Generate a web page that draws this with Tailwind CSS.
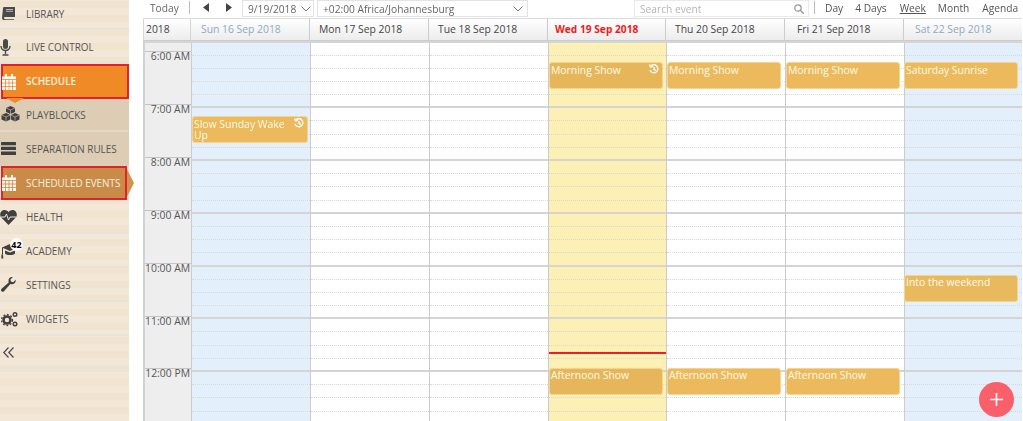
<!DOCTYPE html>
<html><head><meta charset="utf-8"><script src="https://cdn.jsdelivr.net/npm/@tailwindcss/browser@4"></script></head>
<body class="bg-white overflow-hidden">
<div class="flex w-[1023px] h-[421px] overflow-hidden font-['Open_Sans',sans-serif] text-[10.4px] text-[#555] blur-[0.3px]">

<!-- sidebar -->
<aside class="w-[129px] shrink-0 h-full relative bg-[repeating-linear-gradient(0deg,#f3e7d7_0,#f3e7d7_7px,#f0e3d0_7px,#f0e3d0_14px)] flex flex-col text-[9.9px] whitespace-nowrap">
  <a class="h-[30px] shrink-0 flex items-center pl-[26px] border-b-2 border-[#e9e2d8] relative">LIBRARY
    <svg class="absolute left-[1px] top-[6px] w-[15px] h-[15px]" viewBox="0 0 15 17" preserveAspectRatio="none"><path fill="#4a4a4a" d="M3 1h11v11.500H4.500C3.300 12.500 3 13 3 13.700s.4 1.300 1.500 1.300H13v1H3.500C2 16 1 15 1 13.500L2 2.500C2.100 1.500 2.400 1 3 1z"/><path stroke="#ddd" stroke-width=".8" d="M5 4h7M5 6h7"/></svg></a>
  <a class="h-[34px] shrink-0 flex items-center pl-[26px] pt-[2px] border-b-2 border-[#e9e2d8] relative">LIVE CONTROL
    <svg class="absolute left-[0px] top-[9px] w-[11px] h-[17px]" viewBox="0 0 11 17"><rect x="3" y="0" width="5" height="10" rx="2.500" fill="#4a4a4a"/><path d="M1 7c0 6 9 6 9 0M5.500 12v3M2.500 16h6" fill="none" stroke="#4a4a4a" stroke-width="1.400"/></svg></a>
  <a class="h-[35px] shrink-0 flex items-center pl-[25px] bg-[#f08a26] text-[#fff3e2] font-semibold relative outline-2 -outline-offset-2 outline-[#e6202b] ml-[1px] z-10">SCHEDULE
    <svg class="absolute left-[1px] top-[10px] w-[14px] h-[16px]" viewBox="0 0 14 16"><path fill="#fff" d="M0 2.500h14V16H0z"/><path fill="#fff" d="M3 0h2v3H3zM9 0h2v3H9z"/><path stroke="#f08a26" stroke-width=".8" d="M0 5.500h14M3.500 5.500V16M7 5.500V16M10.500 5.500V16M0 9h14M0 12.500h14"/></svg>
    <span class="absolute left-[5px] top-[34px] w-0 h-0 border-x-[9px] border-x-transparent border-t-[5px] border-t-[#f08a26]"></span></a>
  <a class="h-[33px] shrink-0 flex items-center pl-[26px] pt-[2px] bg-[#dccdb4] border-b-2 border-[#e4d9c7] relative">PLAYBLOCKS
    <svg class="absolute left-[1px] top-[7px] w-[19px] h-[16px]" viewBox="0 0 19 16" fill="#404040"><path d="M9.500 0l4.500 2v4L9.500 8 5 6V2z"/><path d="M5 7l4.300 2v4.500L5 15.500.5 13.500V9z"/><path d="M14 7l4.500 2v4.500L14 15.500l-4-2V9z"/><path fill="none" stroke="#dccdb4" stroke-width=".6" d="M5 2l4.500 2L14 2M9.500 4v4M.5 9L5 11l4.300-2M5 11v4.500M10 9l4 2 4.500-2M14 11v4.500"/></svg></a>
  <a class="h-[34px] shrink-0 flex items-center pl-[26px] pt-[1px] bg-[#dccdb4] relative">SEPARATION RULES
    <svg class="absolute left-[1px] top-[10px] w-[15px] h-[13px]" viewBox="0 0 15 13" fill="#404040"><rect width="15" height="3.300" rx=".5"/><rect y="4.800" width="15" height="3.300" rx=".5"/><rect y="9.600" width="15" height="3.300" rx=".5"/></svg></a>
  <a class="h-[34px] shrink-0 flex items-center pl-[25px] bg-[#c98c48] text-[#f8efe2] relative outline-2 -outline-offset-2 outline-[#e6202b] ml-[1px] mr-[2px] z-10">SCHEDULED EVENTS
    <svg class="absolute left-[1px] top-[9px] w-[14px] h-[16px]" viewBox="0 0 14 16"><path fill="#fbf4ea" d="M0 2.500h14V16H0z"/><path fill="#fbf4ea" d="M3 0h2v3H3zM9 0h2v3H9z"/><path stroke="#c98c48" stroke-width=".8" d="M0 5.500h14M3.500 5.500V16M7 5.500V16M10.500 5.500V16M0 9h14M0 12.500h14"/></svg>
    <span class="absolute left-[126px] top-[3px] w-0 h-0 border-y-[14px] border-y-transparent border-l-[7px] border-l-[#d09450]"></span></a>
  <a class="h-[34px] shrink-0 flex items-center pl-[26px] pt-[3px] border-b-2 border-[#e9e2d8] relative">HEALTH
    <svg class="absolute left-[0px] top-[10px] w-[17px] h-[15px]" viewBox="0 0 17 15"><path fill="#404040" d="M8.500 15L1.200 7.500C-1 5 .5 0 4.500 0 6.500 0 7.800 1 8.500 2.200 9.200 1 10.500 0 12.500 0c4 0 5.500 5 3.300 7.500z"/><path fill="none" stroke="#f3e7d7" stroke-width="1" d="M1 7h4l1.500-3 2 6 1.500-3h6"/></svg></a>
  <a class="h-[34px] shrink-0 flex items-center pl-[26px] pt-[2px] border-b-2 border-[#e9e2d8] relative">ACADEMY
    <svg class="absolute left-[1px] top-[10px] w-[17px] h-[15px]" viewBox="0 0 17 15" fill="#404040"><path d="M9 0l8 3.500L9 7 2 4v6.500H1V3.500z"/><path d="M4 6.500L9 8.500l5-2v3c-1.500 2-8.500 2-10 0zM.5 10.500h1.500l.3 4H.3z"/></svg>
    <span class="absolute left-[10px] top-[4px] w-[13px] h-[13px] rounded-full bg-white text-black font-bold text-[9px] leading-[13px] text-center">42</span></a>
  <a class="h-[34px] shrink-0 flex items-center pl-[26px] pt-[2px] border-b-2 border-[#e9e2d8] relative">SETTINGS
    <svg class="absolute left-[1px] top-[9px] w-[15px] h-[15px]" viewBox="0 0 15 15"><path fill="#404040" d="M14.700 2.800l-2.500 2.400-2.200-.6-.6-2.200L11.900 0C9.500-.5 7.300 1.200 7.500 4c0 .6.100 1 .2 1.400L.6 11.800c-.8.800-.8 1.800-.1 2.500s1.800.7 2.500-.1l6.400-7.100c3 .8 5.800-1.200 5.300-4.300z"/></svg></a>
  <a class="h-[34px] shrink-0 flex items-center pl-[26px] pt-[2px] border-b-2 border-[#e9e2d8] relative">WIDGETS
    <svg class="absolute left-[1px] top-[9px] w-[17px] h-[16px]" viewBox="0 0 17 16"><circle cx="6" cy="9" r="3.500" fill="none" stroke="#404040" stroke-width="2.600"/><circle cx="6" cy="9" r="5.500" fill="none" stroke="#404040" stroke-width="1.300" stroke-dasharray="1.800 1.800"/><circle cx="14" cy="3.500" r="1.800" fill="none" stroke="#404040" stroke-width="1.400"/><circle cx="14" cy="13" r="1.800" fill="none" stroke="#404040" stroke-width="1.400"/></svg></a>
  <a class="h-[33px] shrink-0 flex items-center pl-[2px] pt-[2px] border-b-2 border-[#e9e2d8]">
    <svg class="w-[11px] h-[11px] ml-[1px]" viewBox="0 0 11 11" fill="none" stroke="#4a4a4a" stroke-width="1.200"><path d="M5.500 .5L.8 5.500l4.700 5M10.500 .5L5.800 5.500l4.700 5"/></svg></a>
</aside>

<!-- calendar -->
<main class="flex-1 min-w-0 pl-[14px] pr-[1px] flex flex-col text-[#555]">
  <div class="h-[18px] shrink-0 flex items-start text-[10.2px] leading-[16px] relative whitespace-nowrap">
    <span class="ml-[7px] w-[39px] shrink-0 text-[#666]">Today</span>
    <span class="w-[1px] h-[13px] mt-[1px] bg-[#bbb]"></span>
    <svg class="ml-[13px] mt-[3px] w-[6px] h-[9px]" viewBox="0 0 6 9"><path fill="#444" d="M6 0v9L0 4.500z"/></svg>
    <svg class="ml-[17px] mt-[3px] w-[6px] h-[9px]" viewBox="0 0 6 9"><path fill="#444" d="M0 0v9l6-4.500z"/></svg>
    <div class="ml-[10px] w-[72px] h-[17px] border border-[#e3e3e3] flex items-center justify-between pl-[5px] pr-[2px] text-[#666]">9/19/2018
      <svg class="w-[10px] h-[6px]" viewBox="0 0 10 6" fill="none" stroke="#777"><path d="M.5.5L5 5 9.500.5"/></svg></div>
    <div class="ml-[3px] w-[211px] h-[17px] border border-[#e3e3e3] flex items-center justify-between pl-[5px] pr-[4px] text-[#666]">+02:00 Africa/Johannesburg
      <svg class="w-[10px] h-[6px]" viewBox="0 0 10 6" fill="none" stroke="#777"><path d="M.5.500L5 5 9.500.500"/></svg></div>
    <div class="ml-[106px] w-[175px] h-[17px] border border-[#eaeaea] flex items-center justify-between pl-[5px] pr-[4px] text-[#b5b5b5]">Search event
      <svg class="w-[10px] h-[10px]" viewBox="0 0 10 10" fill="none" stroke="#999" stroke-width="1.300"><circle cx="4" cy="4" r="3.200"/><path d="M6.500 6.500L9.700 9.700"/></svg></div>
    <span class="ml-[5px] w-[1px] h-[13px] mt-[1px] bg-[#bbb]"></span>
    <span class="ml-[10px]">Day</span><span class="ml-[12px]">4 Days</span><span class="ml-[13px] underline">Week</span><span class="ml-[12px]">Month</span><span class="ml-[13px]">Agenda</span>
  </div>

  <div class="h-[23px] shrink-0 flex text-[10.35px] leading-[21px] text-[#444] bg-linear-to-b from-white to-[#ececec] border-t border-[#ddd] border-b border-b-[#ccc] whitespace-nowrap">
    <div class="w-[48px] pl-[2px] border-x border-[#d5d5d5]">2018</div>
    <div class="w-[119px] pl-[10px] text-[#8fa9bf] border-r border-[#ccc]">Sun 16 Sep 2018</div>
    <div class="w-[119px] pl-[9px] border-r border-[#ccc]">Mon 17 Sep 2018</div>
    <div class="w-[119px] pl-[9px] border-r border-[#ccc]">Tue 18 Sep 2018</div>
    <div class="w-[118px] pl-[7px] font-bold text-[10.2px] text-[#f01a1a] border-r border-[#ccc]">Wed 19 Sep 2018</div>
    <div class="w-[119px] pl-[9px] border-r border-[#ccc]">Thu 20 Sep 2018</div>
    <div class="w-[119px] pl-[12px] border-r border-[#ccc]">Fri 21 Sep 2018</div>
    <div class="w-[118px] pl-[11px] text-[#8fa9bf]">Sat 22 Sep 2018</div>
  </div>

  <div class="flex-1 min-h-0 flex relative overflow-hidden border-t-2 border-[#d5d5d5] text-[10.4px]">
    <div class="w-[48px] shrink-0 bg-[#eeeeee] border-l-2 border-[#cfd3d8] text-[#555] relative" data-gutter>
    </div>
    <div data-day class="w-[119px] relative bg-[#e3effb] border-l border-[#ccc]">
      <div class="absolute left-[0px] top-[73px] w-[116px] h-[27px] z-10 rounded-[3px] bg-[#ecba5c] border border-[#f3d592] text-[#fffbea] leading-[11px] pl-[1px] pr-[14px] pt-[2px]">Slow Sunday Wake Up<svg class="absolute right-[3px] top-[1px] w-[10px] h-[10px]" viewBox="0 0 10 10" fill="none" stroke="#fff" stroke-width="1.300"><path d="M1.500 2.500A4 4 0 1 1 1 6M.5 .5l1 2.500 2.500-.6M5 3v2.500l2 1"/></svg></div>
    </div>
    <div data-day class="w-[119px] relative bg-white border-l border-[#ccc]"></div>
    <div data-day class="w-[119px] relative bg-white border-l border-[#ccc]"></div>
    <div data-day class="w-[118px] relative bg-[#fdf0b5] border-l border-[#ccc]">
      <div class="absolute left-[0px] top-[19px] w-[114px] h-[27px] z-10 rounded-[3px] bg-[#e8b65a] border border-[#f3d592] text-[#fffbea] leading-[13px] pl-[1px] pt-[1px]">Morning Show<svg class="absolute right-[3px] top-[1px] w-[10px] h-[10px]" viewBox="0 0 10 10" fill="none" stroke="#fff" stroke-width="1.300"><path d="M1.500 2.500A4 4 0 1 1 1 6M.5 .5l1 2.500 2.500-.6M5 3v2.500l2 1"/></svg></div>
      <div class="absolute left-0 right-0 top-[309px] h-[2px] bg-[#ee1c25] z-10"></div>
      <div class="absolute left-[0px] top-[325px] w-[114px] h-[27px] z-10 rounded-[3px] bg-[#e8b65a] border border-[#f3d592] text-[#fffbea] leading-[13px] pl-[1px]">Afternoon Show</div>
    </div>
    <div data-day class="w-[119px] relative bg-white border-l border-[#ccc]">
      <div class="absolute left-[0px] top-[19px] w-[114px] h-[27px] z-10 rounded-[3px] bg-[#ecba5c] border border-[#f3d592] text-[#fffbea] leading-[13px] pl-[1px] pt-[1px]">Morning Show</div>
      <div class="absolute left-[0px] top-[325px] w-[114px] h-[27px] z-10 rounded-[3px] bg-[#ecba5c] border border-[#f3d592] text-[#fffbea] leading-[13px] pl-[1px]">Afternoon Show</div>
    </div>
    <div data-day class="w-[119px] relative bg-white border-l border-[#ccc]">
      <div class="absolute left-[0px] top-[19px] w-[114px] h-[27px] z-10 rounded-[3px] bg-[#ecba5c] border border-[#f3d592] text-[#fffbea] leading-[13px] pl-[1px] pt-[1px]">Morning Show</div>
      <div class="absolute left-[0px] top-[325px] w-[114px] h-[27px] z-10 rounded-[3px] bg-[#ecba5c] border border-[#f3d592] text-[#fffbea] leading-[13px] pl-[1px]">Afternoon Show</div>
    </div>
    <div data-day class="w-[118px] relative bg-[#e3effb] border-l border-[#ccc]">
      <div class="absolute left-[-1px] top-[19px] w-[114px] h-[27px] z-10 rounded-[3px] bg-[#ecba5c] border border-[#f3d592] text-[#fffbea] leading-[13px] pl-[1px] pt-[1px]">Saturday Sunrise</div>
      <div class="absolute left-[-1px] top-[232px] w-[114px] h-[27px] z-10 rounded-[3px] bg-[#e9b95e] border border-[#f3d592] text-[#fffbea] leading-[13px] pl-[1px]">Into the weekend</div>
    </div>
    <button class="absolute left-[836px] top-[339px] w-[35px] h-[35px] z-20 rounded-full bg-[#f9606a] flex items-center justify-center">
      <svg class="w-[13px] h-[13px]" viewBox="0 0 13 13"><path stroke="#fff" stroke-width="1.600" d="M6.500 0v13M0 6.500h13"/></svg>
    </button>
  </div>
</main>
</div>
<script>
var rows='<div class="h-[12.5px] box-border border-b border-dotted border-[#d8d8d8]"></div>';
for(var h=0;h<7;h++){
  rows='' + rows + '<div class="h-[13.2px] box-border border-b border-dotted border-[#d8d8d8]"></div><div class="h-[13.2px] box-border border-b border-dotted border-[#d8d8d8]"></div><div class="h-[13.2px] box-border border-b border-dotted border-[#d8d8d8]"></div><div class="h-[13.2px] box-border border-b-2 border-[#d4d4d4]"></div>';
}
document.querySelectorAll('[data-day]').forEach(function(d){d.insertAdjacentHTML('afterbegin',rows);});
var t=['6:00 AM','7:00 AM','8:00 AM','9:00 AM','10:00 AM','11:00 AM','12:00 PM'],g='';
for(var i=0;i<7;i++){
  g+='<div class="h-[52.85px] box-border border-t border-[#c4c4c4] text-right pr-[1px] leading-[8px] whitespace-nowrap">'+t[i]+'</div>';
}
document.querySelector('[data-gutter]').innerHTML='<div class="h-[8.3px]"></div>'+g;
</script>
</body></html>
